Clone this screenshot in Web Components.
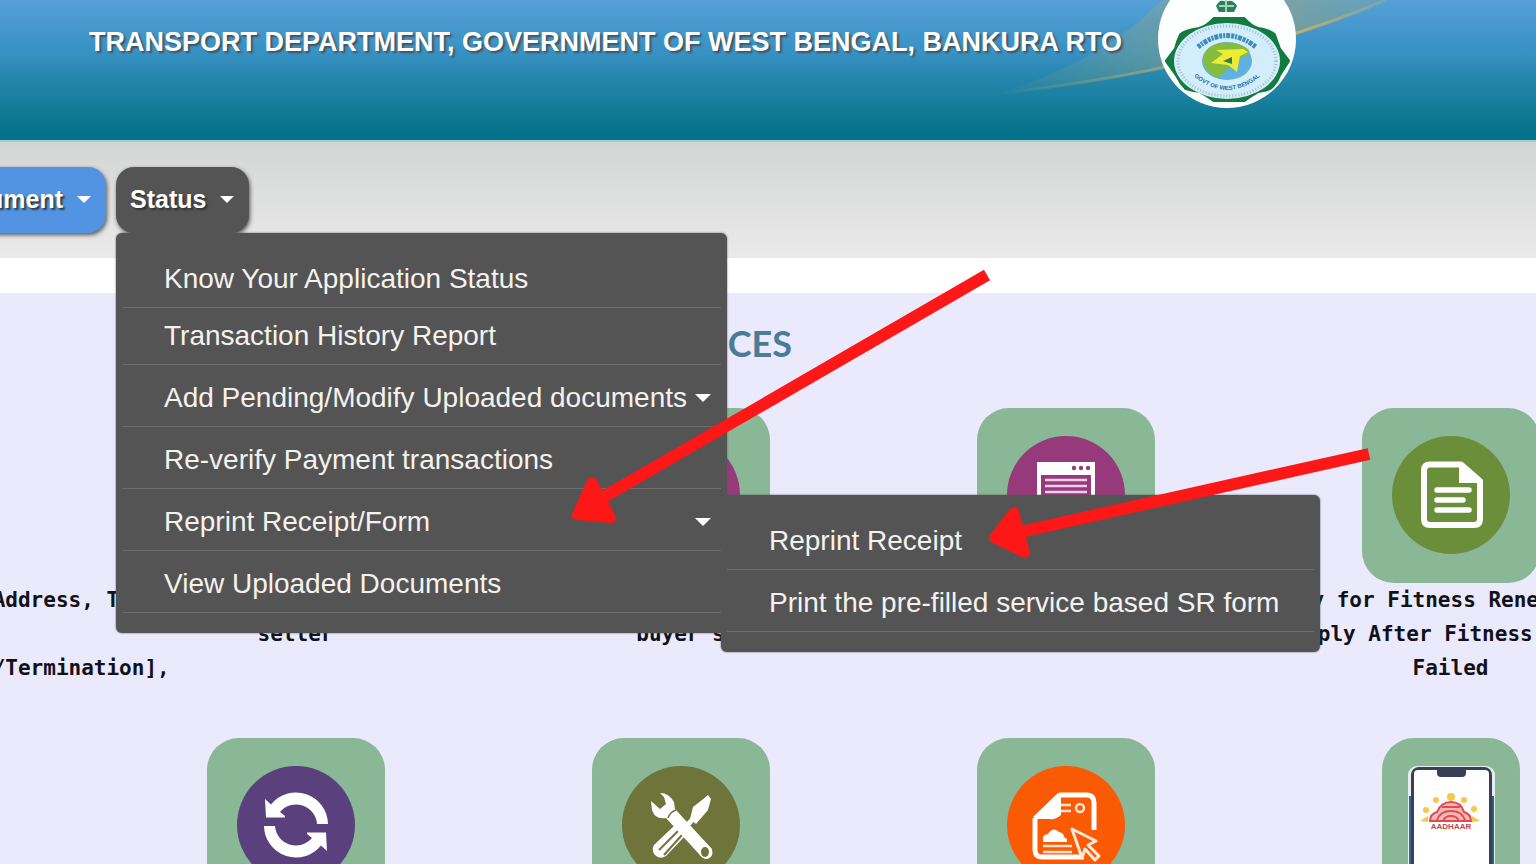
<!DOCTYPE html>
<html lang="en">
<head>
<meta charset="utf-8">
<meta name="viewport" content="width=device-width, initial-scale=1">
<title>Transport Department - Bankura RTO</title>
<style>
    html,
    body {
        margin: 0;
        height: 100%;
        overflow: hidden;
    }

    body {
        --color-menu: #545454;
        --color-tile: #8ab795;
        font-family: "Liberation Sans", Arial, sans-serif;
        background: #ebe9fc;
    }
</style>
</head>
<body>
<rto-page>
    <rto-header slot="header">TRANSPORT DEPARTMENT, GOVERNMENT OF WEST BENGAL, BANKURA RTO</rto-header>

    <rto-nav slot="nav">
        <nav-button slot="start" color="#5294e2">Upload Document</nav-button>
        <nav-button color="#545454">Status
            <drop-menu slot="menu">
                <menu-entry>Know Your Application Status</menu-entry>
                <menu-entry>Transaction History Report</menu-entry>
                <menu-entry tall caret>Add Pending/Modify Uploaded documents</menu-entry>
                <menu-entry tall>Re-verify Payment transactions</menu-entry>
                <menu-entry tall caret>Reprint Receipt/Form
                    <drop-menu slot="submenu">
                        <menu-entry>Reprint Receipt</menu-entry>
                        <menu-entry tall>Print the pre-filled service based SR form</menu-entry>
                    </drop-menu>
                </menu-entry>
                <menu-entry tall>View Uploaded Documents</menu-entry>
            </drop-menu>
        </nav-button>
    </rto-nav>

    <service-grid heading="RC SERVICES">
        <service-tile lines="Duplicate RC, Change of Address, TO||HPA: [Addition/Continuation/Termination],"></service-tile>
        <service-tile lines="|seller"></service-tile>
        <service-tile icon="window" lines="|buyer s"></service-tile>
        <service-tile icon="window"></service-tile>
        <service-tile icon="document" lines="Apply for Fitness Renewal Test|Re-Apply After Fitness Test has|Failed"></service-tile>
        <service-tile></service-tile>
        <service-tile icon="sync"></service-tile>
        <service-tile icon="tools"></service-tile>
        <service-tile icon="form"></service-tile>
        <service-tile icon="phone" narrow></service-tile>
    </service-grid>

    <pointer-arrows slot="overlay"></pointer-arrows>
</rto-page>

<script>
const ICONS = {
    window: `
        <circle cx="59" cy="59" r="59" fill="#963a7b"/>
        <rect x="30" y="26" width="58" height="60" fill="#fff"/>
        <g fill="#963a7b">
            <circle cx="67" cy="32" r="2.2"/><circle cx="74" cy="32" r="2.2"/><circle cx="81" cy="32" r="2.2"/>
            <rect x="34" y="39" width="50" height="43"/>
        </g>
        <path d="M38 44h42M38 50h42M38 56h42M38 62h42M38 68h42" stroke="#f0cfe6" stroke-width="2.4"/>`,
    document: `
        <circle cx="59" cy="59" r="59" fill="#6b8e3a"/>
        <path d="M38 28.500h31L88 45v38q0 6-6 6H38q-6 0-6-6V34.500q0-6 6-6z" fill="none" stroke="#fff" stroke-width="6" stroke-linejoin="round"/>
        <path d="M67 26l23 19v2H67z" fill="#fff"/>
        <path d="M45 54h32M45 64h26M45 74h32" stroke="#fff" stroke-width="5.500" stroke-linecap="round"/>`,
    sync: `
        <circle cx="59" cy="59" r="59" fill="#5a417d"/>
        <g fill="#fff">
            <path d="M28 33l6 5.500A32 32 0 0 1 91 58H80A21 21 0 0 0 43 46l5 4v1.500H29z"/>
            <path d="M28 33l6 5.500A32 32 0 0 1 91 58H80A21 21 0 0 0 43 46l5 4v1.500H29z" transform="rotate(180 59 59)"/>
        </g>`,
    tools: `
        <circle cx="59" cy="59" r="59" fill="#6f743a"/>
        <path d="M80 34l6-5 3 4-3 11-12 14-6-5 3-12z" fill="#fff"/>
        <path d="M72 52L57 68" stroke="#fff" stroke-width="5"/>
        <path d="M52 60L63 70 44 90Q38 94 33 89 29 84 32 79z" fill="#fff"/>
        <path d="M56 65L37 84M60 69L42 89" stroke="#6f743a" stroke-width="2"/>
        <path d="M38 27Q47 27 52 36L53 43 90 83Q92 91 85 93 80 93 77 88L44 52Q33 54 30 44L29 35 38 43 44 38 42 31z" fill="#fff"/>
        <path d="M46 52Q48 46 54 44" fill="none" stroke="#6f743a" stroke-width="1.500"/>
        <ellipse cx="83" cy="86" rx="4" ry="5" fill="#6f743a"/>`,
    form: `
        <circle cx="59" cy="59" r="59" fill="#fb5a04"/>
        <path d="M52 29h28q7 0 7 8v27M28 52v32q0 7 7 7h42" fill="none" stroke="#fff" stroke-width="5"/>
        <path d="M26 51L51 27h3v22q-5 5-12 4H30z" fill="#fff"/>
        <g stroke="#ffe3cf" fill="none" stroke-width="2.500">
            <path d="M54 39h10M54 45h10M36 80h29M36 86h29"/>
            <circle cx="73" cy="42" r="4"/>
        </g>
        <path d="M36 76v-5q2-3 5-3 5-8 11-2 5 1 5 5l3 2v3z" fill="#fff"/>
        <path d="M65 63l24 12-8 4 11 11-4 4-10-11-3 9z" fill="#fb5a04" stroke="#ffe9da" stroke-width="3" stroke-linejoin="round"/>`,
    phone: `
        <rect x="16" y="0" width="87" height="130" rx="9" fill="#e8eef0"/>
        <rect x="17" y="30" width="43" height="100" fill="#346a91"/>
        <rect x="60" y="30" width="42" height="100" fill="#28646b"/>
        <rect x="19" y="1" width="81" height="130" rx="8" fill="#3a3f58"/>
        <rect x="22" y="4" width="75" height="126" rx="4" fill="#fff"/>
        <path d="M45 2h29v5q0 4-4 4H49q-4 0-4-4z" fill="#3a3f58"/>
        <g fill="#f7c64a">
            <circle cx="34" cy="44" r="3"/><circle cx="44" cy="34" r="3"/><circle cx="59" cy="31" r="4"/>
            <circle cx="72" cy="34" r="3"/><circle cx="82" cy="43" r="3"/>
            <path d="M28 55l8-5v6zM88 55l-8-5v6z"/>
        </g>
        <path d="M38 55q0-7 7-9 4-10 14-10t13 10q7 2 7 9z" fill="#f6b8b4" stroke="#df4c50" stroke-width="2"/>
        <path d="M45 54q3-9 14-9t14 9M51 55q2-5 8-5t8 5M50 41h18" fill="none" stroke="#df4c50" stroke-width="2"/>
        <text x="59" y="63" text-anchor="middle" font-size="8" font-weight="700" font-family="Liberation Sans, sans-serif" fill="#c8434a">AADHAAR</text>`,
};

class RtoPage extends HTMLElement {
    constructor() {
        super();
        this.attachShadow({ mode: "open" });
        this.shadowRoot.innerHTML = `
            <style>
                :host {
                    display: flex;
                    flex-direction: column;
                    position: relative;
                    height: 100vh;
                    overflow: hidden;
                }
            </style>
            <slot name="header"></slot>
            <slot name="nav"></slot>
            <slot></slot>
            <slot name="overlay"></slot>
        `;
    }
}

class RtoHeader extends HTMLElement {
    constructor() {
        super();
        this.attachShadow({ mode: "open" });
        this.shadowRoot.innerHTML = `
            <style>
                :host {
                    display: flex;
                    flex: none;
                    align-items: flex-start;
                    gap: 36px;
                    position: relative;
                    height: 140px;
                    padding-left: 89px;
                    overflow: hidden;
                    border-bottom: 2px solid #a3cdd3;
                    background: linear-gradient(#55a0d7, #3791c2 38%, #2787ae 54%, #057389 94%, #057389);
                }

                h1 {
                    margin: 0;
                    padding-top: 26px;
                    font-size: 27px;
                    line-height: 32px;
                    white-space: nowrap;
                    color: #fff;
                    text-shadow: 2px 2px 2px #44525c;
                    position: relative;
                }

                svg {
                    flex: none;
                }

                .rays {
                    position: absolute;
                    top: 0;
                    right: 0;
                }

                .emblem {
                    margin-top: -30px;
                    position: relative;
                }
            </style>
            <svg class="rays" width="560" height="110" viewBox="0 0 560 110" aria-hidden="true">
                <defs>
                    <linearGradient id="beam" x1="0" x2="1">
                        <stop offset="0" stop-color="#9aa67a" stop-opacity="0"/>
                        <stop offset=".7" stop-color="#9aa67a" stop-opacity=".6"/>
                        <stop offset="1" stop-color="#9aa67a" stop-opacity=".2"/>
                    </linearGradient>
                    <linearGradient id="edge" x1="0" x2="1">
                        <stop offset="0" stop-color="#d8b35c" stop-opacity="0"/>
                        <stop offset=".75" stop-color="#d8b35c" stop-opacity=".9"/>
                        <stop offset="1" stop-color="#d8b35c" stop-opacity=".2"/>
                    </linearGradient>
                </defs>
                <path d="M20 94Q250 68 410 0H186Q130 60 20 94z" fill="url(#beam)"/>
                <path d="M20 94Q250 68 410 0" fill="none" stroke="url(#edge)" stroke-width="3"/>
            </svg>
            <h1><slot></slot></h1>
            <svg class="emblem" width="138" height="138" viewBox="0 0 138 138" role="img" aria-label="Government of West Bengal">
                <circle cx="69" cy="69" r="69" fill="#fdfffe"/>
                <path d="M58 36q4-8 10-4 6-4 11 4l-3 6H61z" fill="#2c7f58"/>
                <path d="M61 36h15M68 30v12" stroke="#a8d2b9" stroke-width="2"/>
                <path d="M56 49h30q7 8 14 10 12 2 16 6 2 6 5 14l9 12-9 14q-3 8-9 13-4 2-12 3-7 4-14 9H56q-7-5-14-9-8-1-14-3-5-5-9-13L9 91l9-12q2-8 5-14 4-4 18-6 8-2 15-10z" fill="#127b40" stroke="#127b40" stroke-width="4" stroke-linejoin="round"/>
                <ellipse cx="69" cy="91" rx="53" ry="38" fill="#d3edfa"/>
                <ellipse cx="69" cy="91" rx="49" ry="35" fill="none" stroke="#9ebdd6" stroke-width="3" stroke-dasharray="1 2"/>
                <ellipse cx="69" cy="91" rx="25" ry="19" fill="#61b1df"/>
                <path d="M46 84q8-14 30-11 12 2 16 9-6 6-12 6l-20 20q-18-8-14-24z" fill="#86bc3d"/>
                <path d="M53 93l12-9-7-4 27-1 5 3-8 4-3 16-9-7z" fill="#eeeb35"/>
                <path d="M65 91l9-4v7z" fill="#3c7d4e"/>
                <path d="M40 77Q68 54 98 77" fill="none" stroke="#3d8bc4" stroke-width="5" stroke-dasharray="3 1 2 1 4 1"/>
                <path id="arc" d="M32 103Q69 137 106 103" fill="none"/>
                <text font-size="6" font-weight="700" fill="#1c6fae" text-anchor="middle"><textPath href="#arc" startOffset="50%">GOVT OF WEST BENGAL</textPath></text>
            </svg>
        `;
    }
}

class RtoNav extends HTMLElement {
    constructor() {
        super();
        this.attachShadow({ mode: "open" });
        this.shadowRoot.innerHTML = `
            <style>
                :host {
                    display: block;
                    flex: none;
                    position: relative;
                    z-index: 2;
                    border-bottom: 35px solid #fff;
                    background: linear-gradient(#d4d5d5, #eaeaea);
                    background-clip: padding-box;
                }

                nav {
                    display: grid;
                    grid-template-columns: 106px auto;
                    gap: 10px;
                    justify-content: start;
                    padding: 25px 0;
                }

                .start {
                    display: flex;
                    justify-content: flex-end;
                }
            </style>
            <nav>
                <div class="start"><slot name="start"></slot></div>
                <slot></slot>
            </nav>
        `;
    }
}

class NavButton extends HTMLElement {
    constructor() {
        super();
        this.attachShadow({ mode: "open" });
        this.shadowRoot.innerHTML = `
            <style>
                :host {
                    display: block;
                    flex: none;
                    position: relative;
                }

                button {
                    display: flex;
                    align-items: center;
                    gap: 14px;
                    height: 66px;
                    padding: 0 15px 2px 14px;
                    border: 0;
                    border-radius: 18px;
                    font: 700 25px/30px "Liberation Sans", Arial, sans-serif;
                    color: #fff;
                    white-space: nowrap;
                    text-shadow: 2px 2px 2px #333;
                    box-shadow: 1px 2px 4px #555;
                }

                i {
                    border: 7px solid transparent;
                    border-top-color: #fff;
                    border-bottom: 0;
                }
            </style>
            <button type="button"><span><slot></slot></span><i></i></button>
            <slot name="menu"></slot>
        `;
        this.buttonElement = this.shadowRoot.querySelector("button");
    }

    /**
     * Gets the color property
     */
    get color() {
        return this.getAttribute("color") || "#545454";
    }

    connectedCallback() {
        this.buttonElement.style.background = this.color;
    }
}

class DropMenu extends HTMLElement {
    constructor() {
        super();
        this.attachShadow({ mode: "open" });
        this.shadowRoot.innerHTML = `
            <style>
                :host {
                    display: block;
                    box-sizing: border-box;
                    position: absolute;
                    top: 66px;
                    left: 0;
                    width: 611px;
                    padding: 18px 6px 20px;
                    border-radius: 6px;
                    background: var(--color-menu, #545454);
                    box-shadow: 0 0 2px #555;
                }

                :host([slot="submenu"]) {
                    top: 6px;
                    left: 100%;
                    width: 599px;
                }
            </style>
            <slot></slot>
        `;
    }
}

class MenuEntry extends HTMLElement {
    constructor() {
        super();
        this.attachShadow({ mode: "open" });
        this.shadowRoot.innerHTML = `
            <style>
                :host {
                    display: block;
                    position: relative;
                    border-bottom: 1px solid #6c6c6c;
                }

                a {
                    display: flex;
                    align-items: center;
                    justify-content: space-between;
                    padding: 12px 10px 12px 42px;
                    font-size: 28px;
                    line-height: 32px;
                    color: #f4f2ee;
                    text-decoration: none;
                    white-space: nowrap;
                }

                :host([tall]) a {
                    padding-top: 17px;
                }

                i {
                    display: none;
                    border: 8px solid transparent;
                    border-top-color: #fff;
                    border-bottom: 0;
                }

                :host([caret]) i {
                    display: block;
                }
            </style>
            <a href="#"><span><slot></slot></span><i></i></a>
            <slot name="submenu"></slot>
        `;
    }
}

class ServiceGrid extends HTMLElement {
    constructor() {
        super();
        this.attachShadow({ mode: "open" });
        this.shadowRoot.innerHTML = `
            <style>
                :host {
                    display: block;
                    flex: 1;
                    min-height: 0;
                    overflow: hidden;
                }

                h2 {
                    margin: 0;
                    padding: 26px 170px 41px 0;
                    font: 700 36px/48px Lato, sans-serif;
                    color: #4a7b97;
                    text-align: center;
                }

                .grid {
                    display: grid;
                    grid-template-columns: repeat(5, calc(25vw + 1px));
                    grid-auto-rows: 330px;
                    margin-left: -282px;
                }
            </style>
            <h2></h2>
            <div class="grid"><slot></slot></div>
        `;
    }

    connectedCallback() {
        this.shadowRoot.querySelector("h2").innerText = this.getAttribute("heading") || "";
    }
}

class ServiceTile extends HTMLElement {
    constructor() {
        super();
        this.attachShadow({ mode: "open" });
        this.shadowRoot.innerHTML = `
            <style>
                :host {
                    display: flex;
                    flex-direction: column;
                    align-items: center;
                }

                .tile {
                    display: flex;
                    flex: none;
                    justify-content: center;
                    box-sizing: border-box;
                    width: 178px;
                    height: 175px;
                    padding-top: 28px;
                    border-radius: 32px;
                    background: var(--color-tile, #8ab795);
                    overflow: hidden;
                }

                :host([narrow]) .tile {
                    width: 138px;
                }

                svg {
                    flex: none;
                    width: 118px;
                    height: 130px;
                }

                p {
                    margin: 0;
                    min-height: 34px;
                    font: 700 21px/34px "Comic Mono", "DejaVu Sans Mono", monospace;
                    color: #111118;
                    white-space: nowrap;
                }
            </style>
            <div class="tile"><svg viewBox="0 0 118 130" aria-hidden="true"></svg></div>
        `;
    }

    /**
     * Gets the caption lines
     */
    get lines() {
        const lines = this.getAttribute("lines");
        return lines ? lines.split("|") : [];
    }

    connectedCallback() {
        this.shadowRoot.querySelector("svg").innerHTML = ICONS[this.getAttribute("icon")] || "";
        this.lines.forEach((line) => {
            const p = document.createElement("p");
            p.innerText = line;
            this.shadowRoot.appendChild(p);
        });
    }
}

class PointerArrows extends HTMLElement {
    constructor() {
        super();
        this.attachShadow({ mode: "open" });
        this.shadowRoot.innerHTML = `
            <style>
                :host {
                    display: block;
                    position: absolute;
                    top: 0;
                    left: 0;
                    z-index: 3;
                    pointer-events: none;
                }
            </style>
            <svg width="1400" height="600" viewBox="0 0 1400 600" fill="#fd1717" stroke="#fd1717" aria-hidden="true">
                <path d="M987 275L600 499M1369 454L1020 532" stroke-width="12"/>
                <path d="M592 482L611 518 577 515zM1014 512L1025 553 994 538z" stroke-width="10" stroke-linejoin="round"/>
            </svg>
        `;
    }
}

customElements.define("rto-page", RtoPage);
customElements.define("rto-header", RtoHeader);
customElements.define("rto-nav", RtoNav);
customElements.define("nav-button", NavButton);
customElements.define("drop-menu", DropMenu);
customElements.define("menu-entry", MenuEntry);
customElements.define("service-grid", ServiceGrid);
customElements.define("service-tile", ServiceTile);
customElements.define("pointer-arrows", PointerArrows);
</script>
</body>
</html>
